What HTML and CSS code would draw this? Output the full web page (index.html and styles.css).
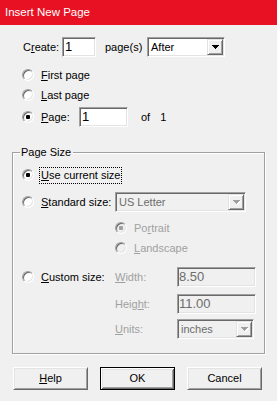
FILE: index.html
```html
<!DOCTYPE html>
<html lang="en">
<head>
<meta charset="utf-8">
<title>Insert New Page</title>
<link rel="stylesheet" href="styles.css">
</head>
<body>
<div class="dialog">
  <header class="titlebar">Insert New Page</header>
  <main class="content">
    <div class="row create-row">
      <span class="lbl create-lbl">C<u>r</u>eate:</span>
      <div class="field create-field">1</div>
      <span class="lbl pages-lbl">page(s)</span>
      <div class="combo after-combo">
        <span class="combo-text">After</span>
        <span class="combo-btn"><svg width="7" height="4" viewBox="0 0 7 4"><path class="tri" d="M0 0h7v1h-1v1h-1v1h-1v1h-1v-1h-1v-1h-1v-1h-1z"/></svg></span>
      </div>
    </div>
    <div class="row radio-row first-row"><span class="radio"></span><span class="rlabel"><u>F</u>irst page</span></div>
    <div class="row radio-row"><span class="radio"></span><span class="rlabel"><u>L</u>ast page</span></div>
    <div class="row radio-row page-row">
      <span class="radio checked"></span><span class="rlabel page-lbl"><u>P</u>age:</span>
      <div class="field page-field">1</div>
      <span class="of">of</span><span class="of-num">1</span>
    </div>
    <fieldset class="group">
      <legend>Page Size</legend>
      <div class="row fs-row r1"><span class="radio checked"></span><span class="rlabel focus"><u>U</u>se current size</span></div>
      <div class="row fs-row r2">
        <span class="radio"></span><span class="rlabel col-lbl"><u>S</u>tandard size:</span>
        <div class="combo disabled std-combo">
          <span class="combo-text">US Letter</span>
          <span class="combo-btn"><svg width="8" height="5" viewBox="0 0 8 5"><path class="tri-shadow" d="M1 1h7v1h-1v1h-1v1h-1v1h-1v-1h-1v-1h-1v-1h-1z"/><path class="tri" d="M0 0h7v1h-1v1h-1v1h-1v1h-1v-1h-1v-1h-1v-1h-1z"/></svg></span>
        </div>
      </div>
      <div class="row fs-row r3 indent"><span class="radio checked disabled"></span><span class="rlabel dis">Po<u>r</u>trait</span></div>
      <div class="row fs-row r4 indent"><span class="radio disabled"></span><span class="rlabel dis"><u>L</u>andscape</span></div>
      <div class="row fs-row r5">
        <span class="radio"></span><span class="rlabel col-lbl"><u>C</u>ustom size:</span>
        <span class="dim-lbl dis"><u>W</u>idth:</span>
        <div class="field disabled dim-field">8.50</div>
      </div>
      <div class="row fs-row r6 indent">
        <span class="dim-lbl dis">Heig<u>h</u>t:</span>
        <div class="field disabled dim-field">11.00</div>
      </div>
      <div class="row fs-row r7 indent">
        <span class="dim-lbl dis"><u>U</u>nits:</span>
        <div class="combo disabled units-combo">
          <span class="combo-text">inches</span>
          <span class="combo-btn"><svg width="8" height="5" viewBox="0 0 8 5"><path class="tri-shadow" d="M1 1h7v1h-1v1h-1v1h-1v1h-1v-1h-1v-1h-1v-1h-1z"/><path class="tri" d="M0 0h7v1h-1v1h-1v1h-1v1h-1v-1h-1v-1h-1v-1h-1z"/></svg></span>
        </div>
      </div>
    </fieldset>
    <div class="buttons">
      <button class="btn" type="button"><u>H</u>elp</button>
      <button class="btn default" type="button">OK</button>
      <button class="btn" type="button">Cancel</button>
    </div>
  </main>
</div>
</body>
</html>
```

FILE: styles.css
```css
* { box-sizing: border-box; }
html, body { margin: 0; padding: 0; }
body {
  width: 277px;
  height: 401px;
  overflow: hidden;
  background: #f0f0f0;
  font-family: "Liberation Sans", Arial, sans-serif;
  font-size: 11px;
  line-height: 13px;
  color: #000;
}
u { text-decoration: underline; text-underline-offset: 1px; }

.titlebar {
  height: 25px;
  background: #e81123;
  color: #fff;
  font-size: 11.5px;
  line-height: 25px;
  padding-left: 5px;
}
.content { padding-top: 12px; }

.row { display: flex; align-items: center; height: 20px; }

.create-row { padding-left: 23px; }
.create-lbl { width: 39px; }
.pages-lbl { width: 42px; margin-left: 9px; }

.field {
  height: 20px;
  background: #fff;
  border: 1px solid;
  border-color: #a0a0a0 #fff #fff #a0a0a0;
  box-shadow: inset 1px 1px 0 #696969, inset -1px -1px 0 #e3e3e3;
  padding: 1px 0 0 2px;
  font-size: 13px;
  line-height: 16px;
}
.field.disabled { background: #f0f0f0; color: #6d6d6d; }
.create-field { width: 34px; }
.page-field { width: 49px; height: 20px; }
.dim-field { width: 79px; padding-left: 1px; }

.combo {
  display: flex;
  height: 20px;
  background: #fff;
  border: 1px solid;
  border-color: #a0a0a0 #fff #fff #a0a0a0;
  box-shadow: inset 1px 1px 0 #696969, inset -1px -1px 0 #e3e3e3;
  padding: 1px;
}
.combo-text { flex: 1; padding-left: 2px; line-height: 16px; }
.combo-btn {
  width: 16px;
  display: flex;
  align-items: center;
  justify-content: center;
  background: #f0f0f0;
  border: 1px solid;
  border-color: #e3e3e3 #696969 #696969 #e3e3e3;
  box-shadow: inset 1px 1px 0 #fff, inset -1px -1px 0 #a0a0a0;
}
.combo-btn svg { display: block; }
.tri { fill: #000; }
.tri-shadow { fill: #fff; }
.combo.disabled { background: #f0f0f0; color: #6d6d6d; }
.combo.disabled .tri { fill: #a0a0a0; }
.combo.disabled .combo-btn svg { margin: 1px 0 0 1px; }
.after-combo { width: 78px; }
.std-combo { width: 131px; }
.units-combo { width: 77px; }

.radio-row { padding-left: 22px; }
.first-row { margin-top: 8px; }
.page-row { margin-top: 2px; }

.radio {
  flex: none;
  position: relative;
  width: 12px;
  height: 12px;
  border-radius: 50%;
  background: #fff;
  border: 1px solid;
  border-color: #a0a0a0 #fff #fff #a0a0a0;
  box-shadow: inset 1px 1px 0 #696969, inset -1px -1px 0 #e3e3e3;
}
.radio.checked::after {
  content: "";
  position: absolute;
  left: 3px;
  top: 3px;
  width: 4px;
  height: 4px;
  border-radius: 1px;
  background: #000;
}
.radio.disabled { background: #f0f0f0; }
.radio.disabled.checked::after { background: #a0a0a0; }

.rlabel { margin-left: 7px; }
.page-lbl { width: 38px; }
.of { margin-left: 13px; }
.of-num { margin-left: 10px; }

.group {
  margin: 19px 0 0 12px;
  width: 253px;
  padding: 6px 0 14px 9px;
  border: 1px solid #a0a0a0;
  box-shadow: inset 1px 1px 0 #fff, 1px 1px 0 #fff;
  min-width: 0;
}
.group legend {
  margin-left: -2px;
  padding: 0 2px 0 1px;
  line-height: 13px;
  background: #f0f0f0;
}

.focus {
  margin-left: 5px;
  padding: 1px 1px;
  border: 1px dotted #000;
}
.col-lbl { width: 74px; }
.dim-lbl { width: 62px; }
.dis { color: #a0a0a0; }

.indent { padding-left: 93px; }
.r2 { margin-top: 7px; }
.r3 { margin-top: 6px; }
.r5 { margin-top: 9px; }
.r6 { margin-top: 7px; }
.r7 { margin-top: 5px; }

.buttons {
  display: flex;
  gap: 12px;
  padding-left: 13px;
  margin-top: 13px;
}
.btn {
  width: 75px;
  height: 23px;
  padding: 0;
  margin: 0;
  font-family: inherit;
  font-size: 11px;
  line-height: 13px;
  color: #000;
  background: #f0f0f0;
  border: 1px solid;
  border-color: #fff #696969 #696969 #fff;
  box-shadow: inset 1px 1px 0 #e3e3e3, inset -1px -1px 0 #a0a0a0;
  border-radius: 0;
  appearance: none;
}
.btn.default {
  border-color: #000;
  box-shadow: inset 1px 1px 0 #fff, inset -1px -1px 0 #696969, inset 2px 2px 0 #e3e3e3, inset -2px -2px 0 #a0a0a0;
}
```
